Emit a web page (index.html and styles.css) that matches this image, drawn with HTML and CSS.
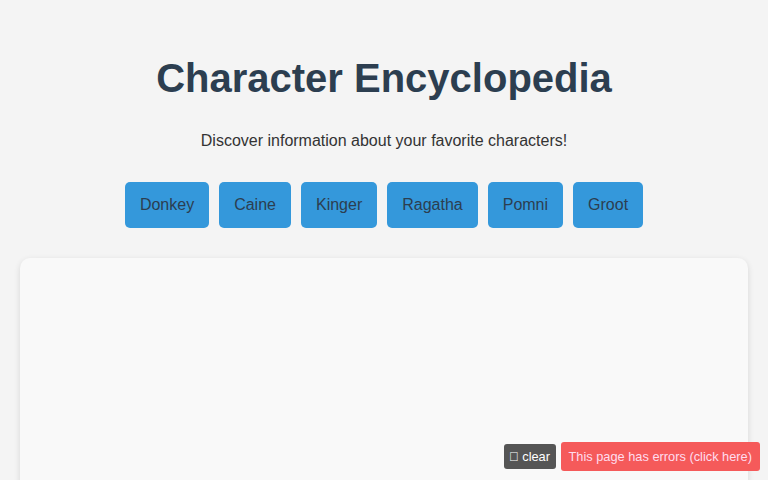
FILE: index.html
```html
<!DOCTYPE html>
<html lang="en">
<head>
<meta charset="utf-8">
<title>Character Encyclopedia</title>
<link rel="stylesheet" href="styles.css">
</head>
<body>
<div class="page">
  <header class="header">
    <h1 class="title">Character Encyclopedia</h1>
    <p class="subtitle">Discover information about your favorite characters!</p>
  </header>
  <nav class="buttons">
    <button class="char-btn">Donkey</button>
    <button class="char-btn">Caine</button>
    <button class="char-btn">Kinger</button>
    <button class="char-btn">Ragatha</button>
    <button class="char-btn">Pomni</button>
    <button class="char-btn">Groot</button>
  </nav>
  <main class="card"></main>
</div>
<div class="error-bar">
  <span class="clear-btn">&#xf00d; clear</span>
  <span class="error-btn">This page has errors (click here)</span>
</div>
</body>
</html>
```
FILE: styles.css
```css
html, body {
  margin: 0;
  padding: 0;
}
body {
  background: #f4f4f4;
  font-family: "Liberation Sans", Arial, sans-serif;
  color: #333;
}
.page {
  padding: 20px;
}
.header {
  text-align: center;
  padding-top: 35px;
}
.title {
  margin: 0;
  font-size: 40px;
  line-height: 46px;
  font-weight: bold;
  color: #2c3e50;
}
.subtitle {
  margin: 31px 0 0;
  font-size: 16px;
  line-height: 18px;
  color: #333;
}
.buttons {
  display: flex;
  justify-content: center;
  gap: 10px;
  margin-top: 32px;
}
.char-btn {
  background: #3498db;
  color: #2c3e50;
  border: none;
  border-radius: 5px;
  padding: 14px 15px;
  font-family: "Liberation Sans", Arial, sans-serif;
  font-size: 16px;
  line-height: 18px;
}
.card {
  margin-top: 30px;
  background: #f9f9f9;
  border-radius: 10px;
  box-shadow: 0 2px 6px rgba(0,0,0,0.12);
  height: 300px;
}
.error-bar {
  position: fixed;
  right: 8px;
  bottom: 9px;
  display: flex;
  align-items: center;
  gap: 5px;
  font-family: "Liberation Sans", Arial, sans-serif;
  font-size: 12.8px;
  color: #fff;
}
.clear-btn {
  background: #555;
  border-radius: 3px;
  padding: 5px 5.5px;
  line-height: 15px;
}
.error-btn {
  background: #f55a5a;
  border-radius: 3px;
  padding: 7px 8px;
  line-height: 15px;
  color: #fde;
}
```
